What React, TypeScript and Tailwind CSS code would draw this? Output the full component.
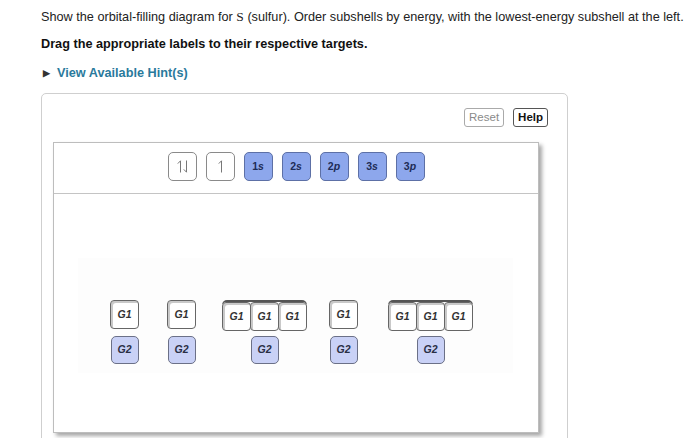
import React from 'react';

const tiles = [
  { n: '1', l: 's' },
  { n: '2', l: 's' },
  { n: '2', l: 'p' },
  { n: '3', l: 's' },
  { n: '3', l: 'p' },
];

// orbital groups: count of G1 boxes per subshell, left margin before the group
const groups = [
  { count: 1, ml: 'ml-[32px]' },
  { count: 1, ml: 'ml-[28px]' },
  { count: 3, ml: 'ml-[26px]' },
  { count: 1, ml: 'ml-[22px]' },
  { count: 3, ml: 'ml-[30px]' },
];

// half-arrow (harpoon) electron spin
function Harpoon({ down }: { down?: boolean }) {
  return (
    <svg width="5" height="13" viewBox="0 0 5 13" className={down ? 'rotate-180 -scale-x-100' : ''}>
      <path d="M3.5 12.5 V0.8 L0.8 3.6" fill="none" stroke="#777" strokeWidth="1" />
    </svg>
  );
}

function G1Box({ joined }: { joined?: boolean }) {
  return (
    <div
      className={`w-[29px] h-[29px] flex items-center justify-center bg-white border border-[#666] rounded-[4px] shadow-[inset_2px_2px_0_#c9c9c9] text-[10.5px] italic font-bold text-[#333] ${joined ? '-ml-px' : ''}`}
    >
      G1
    </div>
  );
}

function G2Box() {
  return (
    <div className="w-[28px] h-[28px] flex items-center justify-center bg-[#c9d1f6] border border-[#6b7087] rounded-[5px] text-[10.5px] italic font-bold text-[#2a2f45]">
      G2
    </div>
  );
}

export default function App() {
  return (
    <div
      className="w-[700px] h-[438px] overflow-hidden bg-white text-[#222]"
      style={{ fontFamily: '"Liberation Sans", Arial, sans-serif' }}
    >
      <div className="pl-[41px] pt-[10px]">
        <p className="text-[12.7px] leading-[14px]">
          Show the orbital-filling diagram for{' '}
          <span className="text-[13.5px]" style={{ fontFamily: '"Liberation Serif", serif' }}>S</span>{' '}
          (sulfur). Order subshells by energy, with the lowest-energy subshell at the left.
        </p>
        <p className="mt-[13px] text-[12.7px] leading-[14px] font-bold text-[#111]">
          Drag the appropriate labels to their respective targets.
        </p>
        <div className="mt-[15px] flex items-center text-[12.7px] leading-[14px] font-bold text-[#2a7a9c]">
          <span className="ml-[2px] mr-[7px] text-[9px] text-[#333]">▶</span>
          View Available Hint(s)
        </div>

        {/* outer answer panel */}
        <div className="mt-[13px] w-[527px] h-[380px] border border-[#cfcfcf] rounded-[5px]">
          <div className="flex justify-end gap-[9px] pt-[14px] pr-[19px]">
            <button className="h-[19px] px-[4px] border border-[#aaa] rounded-[3px] bg-white text-[11.5px] text-[#8a8a8a]">
              Reset
            </button>
            <button className="h-[19px] px-[4px] border border-[#555] rounded-[3px] bg-white text-[11.5px] font-bold text-[#111]">
              Help
            </button>
          </div>

          {/* inner drag panel */}
          <div className="mt-[15px] ml-[11px] w-[486px] h-[291px] border border-[#bdbdbd] bg-white shadow-[3px_3px_4px_rgba(0,0,0,0.35)]">
            <div className="h-[51px] border-b border-[#c4c4c4] flex justify-center gap-[9px] pt-[9px]">
              <div className="w-[29px] h-[29px] flex items-center justify-center gap-[1px] border border-[#8a8a8a] rounded-[5px] bg-white">
                <Harpoon />
                <Harpoon down />
              </div>
              <div className="w-[29px] h-[29px] flex items-center justify-center border border-[#8a8a8a] rounded-[5px] bg-white">
                <Harpoon />
              </div>
              {tiles.map((t, i) => (
                <div
                  key={i}
                  className="w-[29px] h-[29px] flex items-center justify-center border border-[#5d70a6] rounded-[5px] bg-[#8da7ec] text-[10.5px] font-bold text-[#1e2c56]"
                >
                  {t.n}
                  <span className="italic">{t.l}</span>
                </div>
              ))}
            </div>

            <div className="mt-[64px] ml-[24px] w-[435px] h-[115px] bg-[#fdfdfd] pt-[42px]">
              <div className="flex items-start">
                {groups.map((g, i) => (
                  <div key={i} className={`${g.ml} flex flex-col items-center`}>
                    <div className={`flex ${g.count > 1 ? 'border-t-2 border-[#555] rounded-t-[5px]' : ''}`}>
                      {Array.from({ length: g.count }).map((_, j) => (
                        <G1Box key={j} joined={j > 0} />
                      ))}
                    </div>
                    <div className={g.count > 1 ? 'mt-[5px]' : 'mt-[7px]'}>
                      <G2Box />
                    </div>
                  </div>
                ))}
              </div>
            </div>
          </div>
        </div>
      </div>
    </div>
  );
}
